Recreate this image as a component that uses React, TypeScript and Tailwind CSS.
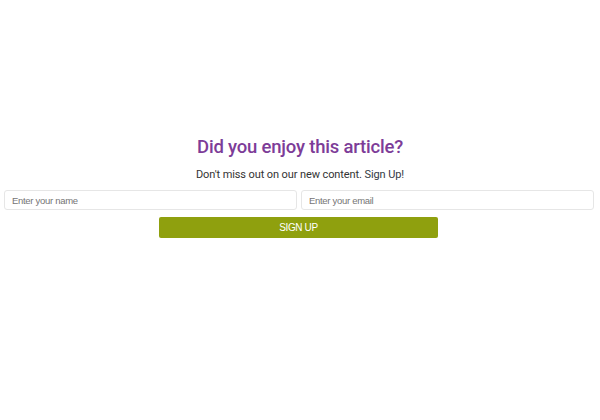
import React from "react";

export default function App() {
  return (
    <div className="w-[600px] h-[420px] bg-white flex flex-col items-center pt-[135px]">
      <h2 className="text-[18.5px] leading-[24px] font-medium text-[#7d3c98] [font-family:Roboto,sans-serif] tracking-[-0.2px]">
        Did you enjoy this article?
      </h2>
      <p className="mt-[8px] text-[11px] leading-[16px] text-[#333333] [font-family:Roboto,sans-serif] tracking-[-0.1px]">
        Don't miss out on our new content. <span className="text-[#333a44]">Sign Up!</span>
      </p>
      <div className="mt-[7px] w-full flex gap-[4px] pl-[4px] pr-[6px]">
        <input
          className="flex-1 h-[20px] border border-[#e6e6e6] rounded-[3px] px-[7px] text-[9.5px] tracking-[-0.3px] [font-family:'Liberation_Sans',Arial,sans-serif] placeholder:text-[#757575] outline-none bg-white"
          placeholder="Enter your name"
        />
        <input
          className="flex-1 h-[20px] border border-[#e6e6e6] rounded-[3px] px-[7px] text-[9.5px] tracking-[-0.3px] [font-family:'Liberation_Sans',Arial,sans-serif] placeholder:text-[#757575] outline-none bg-white"
          placeholder="Enter your email"
        />
      </div>
      <button className="mt-[7px] w-[279px] h-[21px] bg-[#8fa00e] rounded-[2px] text-white text-[10px] tracking-[-0.4px] [font-family:'Liberation_Sans',Arial,sans-serif] uppercase ml-[-3px]">
        Sign up
      </button>
    </div>
  );
}
